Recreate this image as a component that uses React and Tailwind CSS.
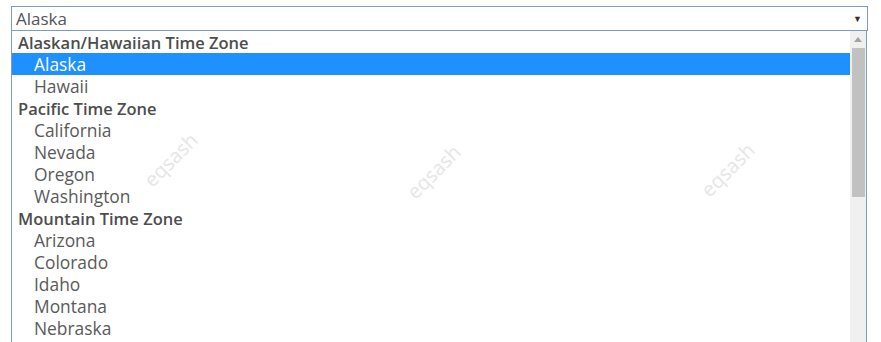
const groups = [
  { label: "Alaskan/Hawaiian Time Zone", options: ["Alaska", "Hawaii"] },
  { label: "Pacific Time Zone", options: ["California", "Nevada", "Oregon", "Washington"] },
  { label: "Mountain Time Zone", options: ["Arizona", "Colorado", "Idaho", "Montana", "Nebraska"] },
]

export default function App() {
  return (
    <div className="relative w-[881px] h-[342px] overflow-hidden bg-white text-[#555] font-['Open_Sans',sans-serif]">
      {/* closed select */}
      <div className="ml-[11px] mt-[6px] w-[857px] h-[25px] border border-[#7f9db9] flex items-center justify-between pl-[4px] pr-[5px]">
        <span className="text-[17px] leading-none">Alaska</span>
        <span className="text-[9px] leading-none text-[#333]">▼</span>
      </div>

      {/* open list */}
      <div className="ml-[11px] w-[856px] h-[311px] border-x border-[#7f9db9] flex">
        <ul className="flex-1">
          {groups.map((g) => (
            <li key={g.label}>
              <div className="h-[22px] flex items-center pt-[2px] pl-[6px] text-[16.5px] leading-none font-semibold text-[#4d4d4d]">
                {g.label}
              </div>
              {g.options.map((o) => (
                <div
                  key={o}
                  className={
                    o === "Alaska"
                      ? "h-[22px] flex items-center pt-[2px] pl-[22px] text-[17.4px] leading-none bg-[#1e90ff] text-white"
                      : "h-[22px] flex items-center pt-[2px] pl-[22px] text-[17.4px] leading-none text-[#5a5a5a]"
                  }
                >
                  {o}
                </div>
              ))}
            </li>
          ))}
        </ul>
        {/* scrollbar */}
        <div className="w-[16px] bg-[#f0f0f0] flex flex-col items-center">
          <div className="h-[17px] w-full flex items-center justify-center">
            <svg width="8" height="5" viewBox="0 0 8 5">
              <path d="M0 5 L4 0 L8 5 Z" fill="#a3a3a3" />
            </svg>
          </div>
          <div className="w-[13px] h-[149px] bg-[#c1c1c1]" />
        </div>
      </div>

      {/* watermarks */}
      <span className="absolute left-[138px] top-[150px] -rotate-45 text-[20px] leading-none text-[#e6e6e6]">eqsash</span>
      <span className="absolute left-[401px] top-[162px] -rotate-45 text-[20px] leading-none text-[#e6e6e6]">eqsash</span>
      <span className="absolute left-[695px] top-[160px] -rotate-45 text-[20px] leading-none text-[#e6e6e6]">eqsash</span>
    </div>
  )
}
